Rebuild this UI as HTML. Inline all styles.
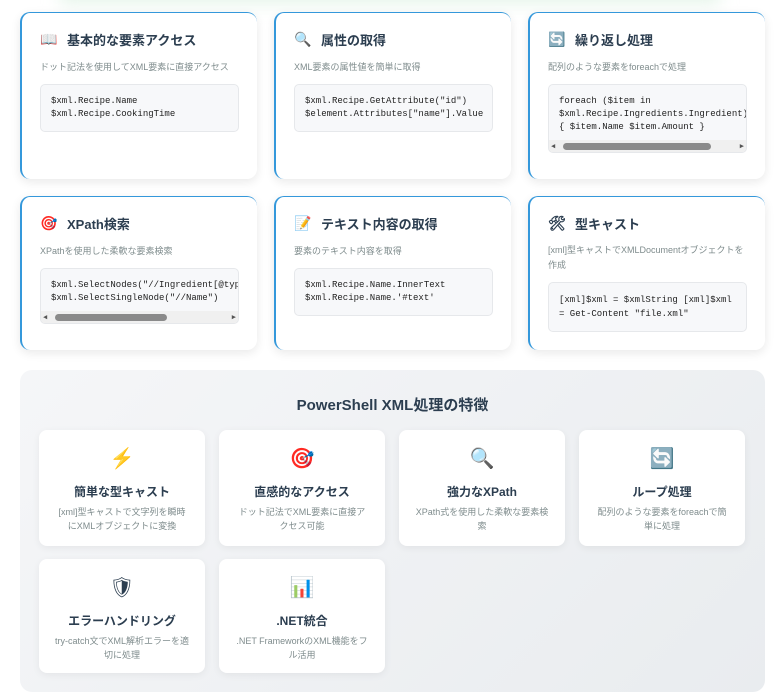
<!DOCTYPE html>
<html><head><meta charset="utf-8"><style>
*{box-sizing:border-box;margin:0;padding:0}
body{width:780px;height:694px;background:#fff;font-family:"Liberation Sans","Noto Sans CJK JP",sans-serif;position:relative;overflow:hidden;color:#2c3e50}
.topglow{position:absolute;left:60px;top:-20px;width:660px;height:24px;background:#e6f5ea;filter:blur(8px)}
.card{position:absolute;background:#fff;border-radius:10px;border-left:2px solid #3498db;border-top:1px solid #3498db;box-shadow:0 3px 10px rgba(0,0,0,.09);padding:0 18px}
.card h3{font-size:13px;font-weight:bold;margin-top:17px;display:flex;align-items:center;gap:9px;color:#2c3e50}
.card h3 .ic{font-size:14px;width:18px;text-align:center}
.card p{font-size:9px;color:#7f8c8d;margin-top:11px;line-height:15px}
.code{margin-top:9px;background:#f7f8fa;border:1px solid #e6e8eb;border-radius:5px;font-family:"Liberation Mono",monospace;font-size:9px;line-height:13px;padding:10px 10px;white-space:pre;overflow:hidden;color:#222}
.sb{height:12px;background:#f0f0f0;margin:6px -10px -10px;position:relative}
.sb .th{position:absolute;left:14px;top:3px;height:7px;border-radius:4px;background:#8a8a8a}
.sb:before{content:"◀";position:absolute;left:2px;top:1px;font-size:7px;color:#555}
.sb:after{content:"▶";position:absolute;right:2px;top:1px;font-size:7px;color:#555}
.feat{position:absolute;left:20px;top:370px;width:745px;height:322px;border-radius:12px;background:linear-gradient(135deg,#f5f6f8,#e9ecef)}
.feat h2{position:absolute;top:24px;width:100%;text-align:center;font-size:15px;font-weight:bold}
.f{position:absolute;width:166px;background:#fff;border-radius:8px;box-shadow:0 2px 8px rgba(0,0,0,.06);text-align:center}
.f .i{font-size:20px;margin-top:16px;height:26px}
.f b{display:block;font-size:12px;margin-top:11px}
.f span{display:block;font-size:9px;color:#7f8c8d;line-height:14px;margin:5px 16px 0}
</style></head><body>
<div class="topglow"></div>

<div class="card" style="left:20px;top:12px;width:237px;height:167px">
<h3><span class="ic">📖</span>基本的な要素アクセス</h3>
<p>ドット記法を使用してXML要素に直接アクセス</p>
<div class="code">$xml.Recipe.Name
$xml.Recipe.CookingTime</div></div>

<div class="card" style="left:274px;top:12px;width:237px;height:167px">
<h3><span class="ic">🔍</span>属性の取得</h3>
<p>XML要素の属性値を簡単に取得</p>
<div class="code">$xml.Recipe.GetAttribute("id")
$element.Attributes["name"].Value</div></div>

<div class="card" style="left:528px;top:12px;width:237px;height:167px">
<h3><span class="ic">🔄</span>繰り返し処理</h3>
<p>配列のような要素をforeachで処理</p>
<div class="code" style="padding-bottom:10px">foreach ($item in
$xml.Recipe.Ingredients.Ingredient)
{ $item.Name $item.Amount }<div class="sb"><div class="th" style="width:148px"></div></div></div></div>

<div class="card" style="left:20px;top:196px;width:237px;height:154px">
<h3><span class="ic">🎯</span>XPath検索</h3>
<p>XPathを使用した柔軟な要素検索</p>
<div class="code">$xml.SelectNodes("//Ingredient[@type
$xml.SelectSingleNode("//Name")<div class="sb"><div class="th" style="width:112px"></div></div></div></div>

<div class="card" style="left:274px;top:196px;width:237px;height:154px">
<h3><span class="ic">📝</span>テキスト内容の取得</h3>
<p>要素のテキスト内容を取得</p>
<div class="code">$xml.Recipe.Name.InnerText
$xml.Recipe.Name.'#text'</div></div>

<div class="card" style="left:528px;top:196px;width:237px;height:154px">
<h3><span class="ic">🛠</span>型キャスト</h3>
<p style="margin-top:10px">[xml]型キャストでXMLDocumentオブジェクトを作成</p>
<div class="code" style="line-height:14px;margin-top:9px">[xml]$xml = $xmlString [xml]$xml
= Get-Content "file.xml"</div></div>

<div class="feat"><h2>PowerShell XML処理の特徴</h2></div>
<div class="f" style="left:39px;top:430px;height:116px"><div class="i" style="color:#f39c12">⚡</div><b>簡単な型キャスト</b><span>[xml]型キャストで文字列を瞬時にXMLオブジェクトに変換</span></div>
<div class="f" style="left:219px;top:430px;height:116px"><div class="i">🎯</div><b>直感的なアクセス</b><span>ドット記法でXML要素に直接アクセス可能</span></div>
<div class="f" style="left:399px;top:430px;height:116px"><div class="i">🔍</div><b>強力なXPath</b><span>XPath式を使用した柔軟な要素検索</span></div>
<div class="f" style="left:579px;top:430px;height:116px"><div class="i">🔄</div><b>ループ処理</b><span>配列のような要素をforeachで簡単に処理</span></div>
<div class="f" style="left:39px;top:559px;height:114px"><div class="i">🛡</div><b>エラーハンドリング</b><span>try-catch文でXML解析エラーを適切に処理</span></div>
<div class="f" style="left:219px;top:559px;height:114px"><div class="i">📊</div><b>.NET統合</b><span>.NET FrameworkのXML機能をフル活用</span></div>
</body></html>
